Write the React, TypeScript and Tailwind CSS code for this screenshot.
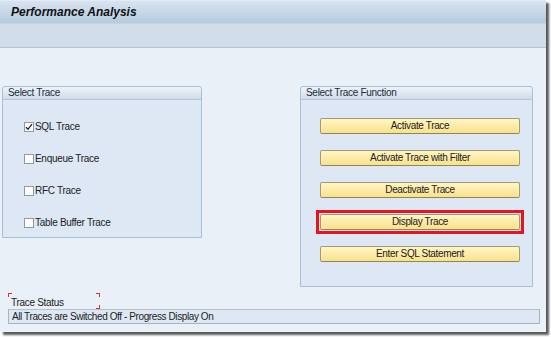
import React from "react";

const font = { fontFamily: '"Liberation Sans", Arial, sans-serif' };

const traces = [
  { label: "SQL Trace", checked: true },
  { label: "Enqueue Trace", checked: false },
  { label: "RFC Trace", checked: false },
  { label: "Table Buffer Trace", checked: false },
];

const functions = [
  "Activate Trace",
  "Activate Trace with Filter",
  "Deactivate Trace",
  "Display Trace",
  "Enter SQL Statement",
];

const GroupBox: React.FC<{ title: string; className: string; children: React.ReactNode }> = ({ title, className, children }) => (
  <div className={`flex flex-col border border-[#a9bfd6] rounded-t-[3px] bg-[#dde8f4] ${className}`}>
    <div className="h-[13px] flex items-center px-[5px] text-[10px] tracking-[-0.3px] text-[#1f2b38] bg-gradient-to-b from-[#edf3f9] to-[#cfdcea] border-b border-[#b3c6da] rounded-t-[3px] leading-none">
      {title}
    </div>
    {children}
  </div>
);

const Checkbox: React.FC<{ checked: boolean }> = ({ checked }) => (
  <span className="w-[10px] h-[10px] bg-white border border-[#8d9aab] flex items-center justify-center shrink-0">
    {checked && (
      <svg width="8" height="8" viewBox="0 0 8 8">
        <path d="M1 4.2 L3 6.3 L7 1.2" fill="none" stroke="#222" strokeWidth="1.3" />
      </svg>
    )}
  </span>
);

const SapButton: React.FC<{ label: string }> = ({ label }) => (
  <div className="h-[16px] w-[200px] flex items-center justify-center text-[10px] tracking-[-0.35px] text-[#222] rounded-[2px] border border-[#a49a78] border-b-[#8c8462] bg-gradient-to-b from-[#fff6c4] to-[#fbe189] leading-none">
    {label}
  </div>
);

export default function App() {
  return (
    <div className="w-[551px] h-[337px] bg-white" style={font}>
      <div className="w-[546px] h-[332px] flex flex-col bg-[#e9f0f7] shadow-[3px_3px_2px_rgba(0,0,0,0.65)] border-t border-[#e4ebf2]">
        {/* title bar */}
        <div className="h-[23px] flex items-center pl-[11px] bg-gradient-to-b from-[#d8e4f0] to-[#b5cadf] border-b border-[#c6d4e2]">
          <span className="text-[12px] font-bold italic text-[#111]">Performance Analysis</span>
        </div>
        {/* toolbar */}
        <div className="h-[24px] bg-[#d1dde8] border-b border-[#b6c6d6]" />

        {/* content */}
        <div className="flex-1 flex flex-col pt-[38px]">
          <div className="flex items-start pl-[2px]">
            <GroupBox title="Select Trace" className="w-[200px] h-[152px]">
              <div className="flex flex-col gap-[21px] pl-[21px] pt-[21px]">
                {traces.map((t) => (
                  <div key={t.label} className="flex items-center gap-[1px] h-[11px] text-[10px] tracking-[-0.3px] text-[#222]">
                    <Checkbox checked={t.checked} />
                    <span>{t.label}</span>
                  </div>
                ))}
              </div>
            </GroupBox>

            <GroupBox title="Select Trace Function" className="ml-[98px] w-[233px] h-[201px]">
              <div className="flex flex-col gap-[16px] pl-[19px] pt-[18px]">
                {functions.map((f) =>
                  f === "Display Trace" ? (
                    <div key={f} className="-m-[4px] p-[1px] border-[3px] border-[#e8141c] w-[208px]">
                      <SapButton label={f} />
                    </div>
                  ) : (
                    <SapButton key={f} label={f} />
                  )
                )}
              </div>
            </GroupBox>
          </div>

          {/* trace status */}
          <div className="mt-[6px] pl-[8px]">
            <div className="relative w-[92px] h-[16px] flex items-end pl-[3px] pb-[1px] text-[10px] tracking-[-0.3px] text-[#222] leading-none">
              Trace Status
              <span className="absolute left-0 top-0 w-[4px] h-[4px] border-l border-t border-[#d43030]" />
              <span className="absolute right-0 top-0 w-[4px] h-[4px] border-r border-t border-[#d43030]" />
              <span className="absolute right-0 bottom-0 w-[4px] h-[4px] border-r border-b border-[#d43030]" />
            </div>
            <div className="w-[532px] h-[15px] flex items-center pl-[3px] text-[10px] tracking-[-0.4px] text-[#222] bg-[#dde8f4] border border-[#aab2bb] border-t-[#b8bfc6] leading-none">
              All Traces are Switched Off - Progress Display On
            </div>
          </div>
        </div>
      </div>
    </div>
  );
}
